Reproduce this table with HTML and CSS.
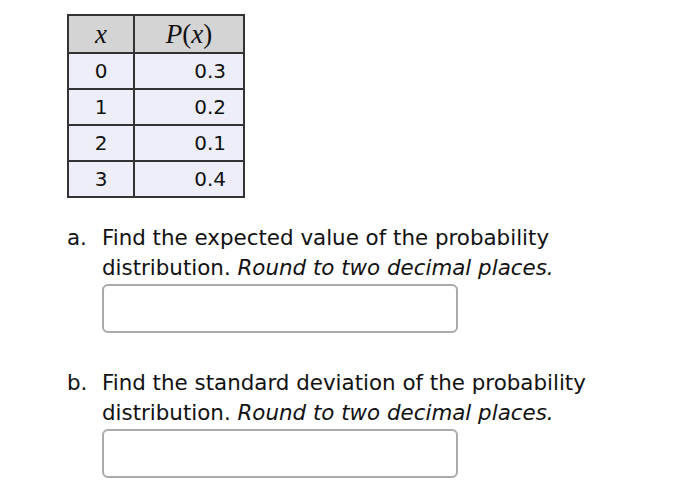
FILE: index.html
```html
<!DOCTYPE html>
<html>
<head>
<meta charset="utf-8">
<link rel="stylesheet" href="styles.css">
</head>
<body>
<div class="page">
  <table class="dist">
    <thead>
      <tr><th class="cx"><i class="math">x</i></th><th class="cp"><i class="math">P</i>(<i class="math">x</i>)</th></tr>
    </thead>
    <tbody>
      <tr><td class="cx">0</td><td class="cp">0.3</td></tr>
      <tr><td class="cx">1</td><td class="cp">0.2</td></tr>
      <tr><td class="cx">2</td><td class="cp">0.1</td></tr>
      <tr><td class="cx">3</td><td class="cp">0.4</td></tr>
    </tbody>
  </table>
  <div class="q">
    <div class="label">a.</div>
    <div class="body">
      <p class="text">Find the expected value of the probability distribution. <em>Round to two decimal places.</em></p>
      <div class="answer"></div>
    </div>
  </div>
  <div class="q qb">
    <div class="label">b.</div>
    <div class="body">
      <p class="text">Find the standard deviation of the probability distribution. <em>Round to two decimal places.</em></p>
      <div class="answer"></div>
    </div>
  </div>
</div>
</body>
</html>
```
FILE: styles.css
```css
html, body { margin: 0; padding: 0; background: #fff; }
body { font-family: "DejaVu Sans", "Open Sans", sans-serif; color: #111; }
.page { padding: 14px 0 0 67px; }
.dist { border-collapse: collapse; font-size: 20px; }
.dist th, .dist td { border: 2px solid #333; padding: 0; }
.dist th { background: #d4d4d4; height: 36px; font-weight: normal; font-family: "Liberation Serif", "DejaVu Serif", serif; font-size: 27px; line-height: 1; }
.dist td { background: #eeeef9; height: 34px; }
.cx { width: 64px; text-align: center; }
.cp { width: 108px; }
td.cp { text-align: right; padding-right: 17px; box-sizing: border-box; }
th.cp { text-align: center; }
.math { font-style: italic; }
.q { display: grid; grid-template-columns: 35px 500px; margin-top: 25px; font-size: 21.4px; line-height: 30px; }
.qb { margin-top: 35px; }
.text { margin: 0; width: 495px; }
.answer { width: 352px; height: 45px; border: 2px solid #aaa; border-radius: 6px; margin-top: 1px; }
```
